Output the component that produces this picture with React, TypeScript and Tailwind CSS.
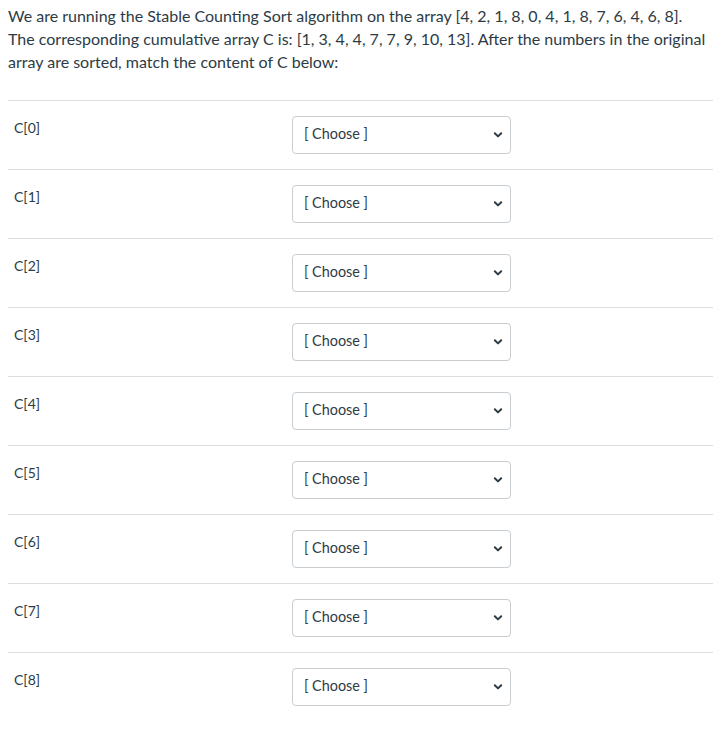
import React from "react";

const rows = ["C[0]", "C[1]", "C[2]", "C[3]", "C[4]", "C[5]", "C[6]", "C[7]", "C[8]"];

function Chevron() {
  return (
    <svg width="10" height="8" viewBox="0 0 10 8" className="shrink-0">
      <path d="M1.8 2.2 L5 5.4 L8.2 2.2" fill="none" stroke="#2d3b45" strokeWidth="2" strokeLinecap="round" strokeLinejoin="round" />
    </svg>
  );
}

export default function App() {
  return (
    <div className="w-[722px] h-[729px] bg-white overflow-hidden text-[#2d3b45]" style={{ fontFamily: "Lato, 'Liberation Sans', sans-serif" }}>
      <div className="pl-[8px] pr-[9px] pt-[4px]">
        <p className="text-[16px] leading-[23px] whitespace-nowrap">
          We are running the Stable Counting Sort algorithm on the array [4, 2, 1, 8, 0, 4, 1, 8, 7, 6, 4, 6, 8].
          <br />
          The corresponding cumulative array C is: [1, 3, 4, 4, 7, 7, 9, 10, 13]. After the numbers in the original
          <br />
          array are sorted, match the content of C below:
        </p>
        <div className="mt-[27px]">
          {rows.map((r) => (
            <div key={r} className="flex border-t border-[#dcdee0] py-[15px]">
              <div className="w-[284px] pl-[6px] pt-[2px] text-[14px] leading-[20px]">{r}</div>
              <div className="w-[219px] h-[38px] border border-[#c7cdd1] rounded-[4px] flex items-center justify-between pl-[11px] pr-[7px]">
                <span className="text-[14.4px] leading-[20px] pb-[3px]">[ Choose ]</span>
                <Chevron />
              </div>
            </div>
          ))}
        </div>
      </div>
    </div>
  );
}
